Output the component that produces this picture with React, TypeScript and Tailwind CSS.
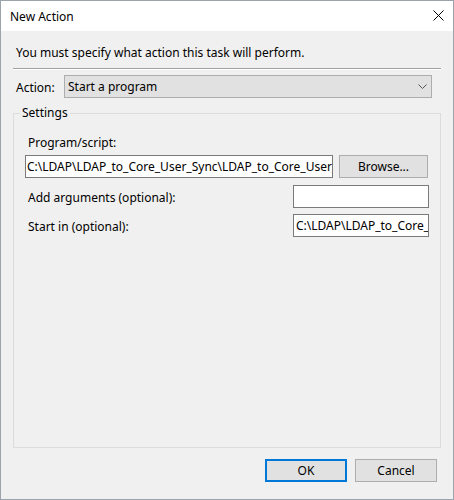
const programPath = String.raw`C:\LDAP\LDAP_to_Core_User_Sync\LDAP_to_Core_User_Sync.exe`;
const startInPath = String.raw`C:\LDAP\LDAP_to_Core_User_Sync`;

const font = { fontFamily: '"Noto Sans", "Open Sans", sans-serif' };

const TextBox = ({ value, className }: { value: string; className?: string }) => (
  <input
    readOnly
    value={value}
    className={`h-[23px] border border-[#7a7a7a] bg-white pl-[1px] text-[12px] text-black outline-none ${className ?? ""}`}
  />
);

const WinButton = ({
  label,
  primary,
  className,
}: {
  label: string;
  primary?: boolean;
  className?: string;
}) => (
  <button
    className={`flex h-[23px] items-center justify-center bg-[#e1e1e1] text-[12px] text-black ${
      primary ? "border-2 border-[#0078d7]" : "border border-[#adadad]"
    } ${className ?? ""}`}
  >
    {label}
  </button>
);

export default function App() {
  return (
    <div
      className="flex h-[500px] w-[454px] flex-col border border-[#9ba4ad] bg-[#f0f0f0] text-[12px] leading-[16px] text-black"
      style={font}
    >
      {/* title bar */}
      <div className="flex h-[30px] shrink-0 items-center justify-between bg-white pl-[9px] pr-[9px]">
        <span className="pt-[2px]">New Action</span>
        <svg width="11" height="11" viewBox="0 0 11 11" className="mt-[-1px]">
          <path d="M0.5 0.5 L10.5 10.5 M10.5 0.5 L0.5 10.5" stroke="#000" strokeWidth="1" />
        </svg>
      </div>

      <div className="flex flex-1 flex-col px-[12px] pb-[17px]">
        <p className="mt-[14px] pl-[3px]">You must specify what action this task will perform.</p>

        <div className="mt-[7px] h-[2px] border-t border-b border-t-[#a0a0a0] border-b-white" />

        {/* action */}
        <div className="mt-[5px] flex items-center pl-[3px] pr-[9px]">
          <span className="w-[48px] shrink-0 pt-[2px]">Action:</span>
          <button className="flex h-[23px] flex-1 items-center justify-between border border-[#adadad] bg-[#e1e1e1] pl-[3px] pr-[4px] text-[12px]">
            <span>Start a program</span>
            <svg width="9" height="5" viewBox="0 0 9 5">
              <polyline points="0.5,0.5 4.5,4.5 8.5,0.5" fill="none" stroke="#555" strokeWidth="1" />
            </svg>
          </button>
        </div>

        {/* settings group */}
        <fieldset className="mt-[7px] flex-1 border border-[#dcdcdc] pl-[6px] pr-[11px]">
          <legend className="px-[2px]">Settings</legend>
          <div className="ml-[5px] flex flex-col">
            <span className="mt-[14px] pl-[3px]">Program/script:</span>
            <div className="mt-[4px] flex items-center justify-between">
              <TextBox value={programPath} className="w-[308px]" />
              <WinButton label="Browse..." className="mr-[1px] w-[89px]" />
            </div>
            <div className="mt-[7px] flex items-start justify-between">
              <span className="mt-[5px] pl-[3px]">Add arguments (optional):</span>
              <TextBox value="" className="w-[136px]" />
            </div>
            <div className="mt-[6px] flex items-start justify-between">
              <span className="mt-[5px] pl-[3px]">Start in (optional):</span>
              <TextBox value={startInPath} className="w-[136px] pl-[2px]" />
            </div>
          </div>
        </fieldset>

        <div className="mt-[11px] flex justify-end gap-[8px] pr-[4px]">
          <WinButton label="OK" primary className="w-[82px]" />
          <WinButton label="Cancel" className="w-[82px]" />
        </div>
      </div>
    </div>
  );
}
